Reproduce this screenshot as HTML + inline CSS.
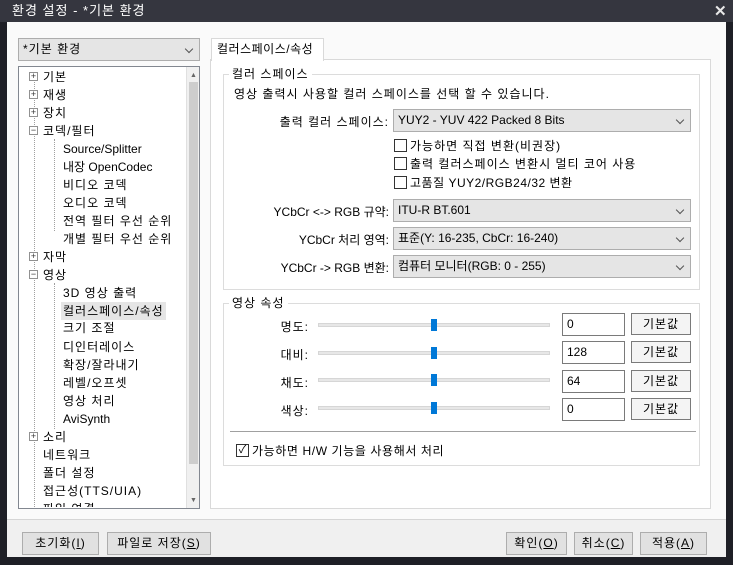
<!DOCTYPE html>
<html><head><meta charset="utf-8"><style>
*{margin:0;padding:0;box-sizing:border-box}
body{width:733px;height:565px;background:#1e1f26;font-family:"Liberation Sans","Noto Sans CJK KR",sans-serif;font-size:12px;color:#000;position:relative;overflow:hidden;letter-spacing:1px}
.l0{letter-spacing:0}
.a{position:absolute}
.title{left:0;top:0;width:733px;height:22px;background:#35363f;color:#fff;font-size:13px;line-height:22px;padding-left:12px}
.win{left:7px;top:22px;width:719px;height:535px;background:#fafafa}
.combo{background:#e5e5e5;border:1px solid #adadad;height:23px;line-height:21px;padding-left:4px;white-space:nowrap}
.combo:after{content:"";position:absolute;right:7px;top:7px;width:5px;height:5px;border-right:1px solid #555;border-bottom:1px solid #555;transform:rotate(45deg)}
.tree{left:18px;top:66px;width:182px;height:443px;background:#fff;border:1px solid #828790;overflow:hidden}
.sb{right:0;top:0;width:13px;height:441px;background:#f0f0f0;border-left:1px solid #e0e0e0}
.ti{position:absolute;height:18px;line-height:18px;white-space:nowrap}
.pm{position:absolute;width:9px;height:9px;border:1px solid #919191;background:#fff;font-size:9px;line-height:7px;text-align:center;color:#333;letter-spacing:0}
.lbl{text-align:right;white-space:nowrap}
.cb{position:absolute;width:13px;height:13px;border:1px solid #333;background:#fff}
.grp{border:1px solid #dcdcdc}
.gt{background:#fff;padding:0 3px;line-height:14px}
.track{height:4px;background:#e7e7e7;border:1px solid #d6d6d6}
.thumb{width:6px;height:12px;background:#0078d7}
.edit{border:1px solid #7a7a7a;background:#fff;height:23px;line-height:21px;padding-left:4px;letter-spacing:0}
.btn{border:1px solid #adadad;background:#e1e1e1;height:23px;line-height:21px;text-align:center}
.btn2{border:1px solid #7a7a7a;background:#f4f4f4;height:22px;line-height:20px;text-align:center}
.hd{position:absolute;width:6px;border-top:1px dotted #a0a0a0}
</style></head><body>
<div class="a title">환경 설정 - *기본 환경</div>
<div class="a" style="left:714px;top:2px;color:#e8e8e8;font-size:15px;font-weight:bold">✕</div>
<div class="a win"></div>

<div class="a combo" style="left:18px;top:38px;width:182px;height:23px">*기본 환경</div>

<div class="a tree">
<div class="a sb"><div class="a" style="left:3px;top:5px;font-size:7px;color:#666">▲</div><div class="a" style="left:2px;top:15px;width:9px;height:382px;background:#cdcdcd"></div><div class="a" style="left:3px;bottom:4px;font-size:7px;color:#666">▼</div></div>
<div class="a" style="left:15px;top:10px;height:430px;border-left:1px dotted #a0a0a0"></div>
<div class="a" style="left:35px;top:72px;height:92px;border-left:1px dotted #a0a0a0"></div>
<div class="a" style="left:35px;top:216px;height:146px;border-left:1px dotted #a0a0a0"></div>
</div>
<div class="a" style="left:19px;top:67px;width:167px;height:440px;overflow:hidden">
<div class="pm" style="left:10px;top:5px">+</div><div class="ti" style="left:24px;top:1px">기본</div>
<div class="pm" style="left:10px;top:23px">+</div><div class="ti" style="left:24px;top:19px">재생</div>
<div class="pm" style="left:10px;top:41px">+</div><div class="ti" style="left:24px;top:37px">장치</div>
<div class="pm" style="left:10px;top:59px">−</div><div class="ti" style="left:24px;top:55px">코덱/필터</div>
<div class="ti l0" style="left:44px;top:73px">Source/Splitter</div>
<div class="ti l0" style="left:44px;top:91px">내장 OpenCodec</div>
<div class="ti" style="left:44px;top:109px">비디오 코덱</div>
<div class="ti" style="left:44px;top:127px">오디오 코덱</div>
<div class="ti" style="left:44px;top:145px">전역 필터 우선 순위</div>
<div class="ti" style="left:44px;top:163px">개별 필터 우선 순위</div>
<div class="pm" style="left:10px;top:185px">+</div><div class="ti" style="left:24px;top:181px">자막</div>
<div class="pm" style="left:10px;top:203px">−</div><div class="ti" style="left:24px;top:199px">영상</div>
<div class="ti" style="left:44px;top:217px">3D 영상 출력</div>
<div class="ti" style="left:42px;top:235px;background:#e5e5e5;padding:0 2px">컬러스페이스/속성</div>
<div class="ti" style="left:44px;top:252px">크기 조절</div>
<div class="ti" style="left:44px;top:271px">디인터레이스</div>
<div class="ti" style="left:44px;top:289px">확장/잘라내기</div>
<div class="ti" style="left:44px;top:307px">레벨/오프셋</div>
<div class="ti" style="left:44px;top:325px">영상 처리</div>
<div class="ti l0" style="left:44px;top:343px">AviSynth</div>
<div class="pm" style="left:10px;top:365px">+</div><div class="ti" style="left:24px;top:361px">소리</div>
<div class="ti" style="left:24px;top:379px">네트워크</div>
<div class="ti" style="left:24px;top:397px">폴더 설정</div>
<div class="ti" style="left:24px;top:415px">접근성(TTS/UIA)</div>
<div class="ti" style="left:24px;top:433px">파일 연결</div>
</div>

<div class="a" style="left:210px;top:59px;width:501px;height:450px;background:#fff;border:1px solid #d9d9d9"></div>
<div class="a" style="left:211px;top:38px;width:113px;height:23px;background:#fff;border:1px solid #d9d9d9;border-bottom:none;padding-left:5px;line-height:20px;letter-spacing:0.5px">컬러스페이스/속성</div>

<div class="a grp" style="left:223px;top:74px;width:477px;height:216px"></div>
<div class="a gt" style="left:229px;top:67px">컬러 스페이스</div>
<div class="a" style="left:234px;top:85px">영상 출력시 사용할 컬러 스페이스를 선택 할 수 있습니다.</div>
<div class="a lbl" style="left:230px;top:113px;width:159px">출력 컬러 스페이스:</div>
<div class="a combo l0" style="left:393px;top:109px;width:298px">YUY2 - YUV 422 Packed 8 Bits</div>
<div class="cb" style="left:394px;top:139px"></div><div class="a" style="left:410px;top:137px">가능하면 직접 변환(비권장)</div>
<div class="cb" style="left:394px;top:157px"></div><div class="a" style="left:410px;top:155px">출력 컬러스페이스 변환시 멀티 코어 사용</div>
<div class="cb" style="left:394px;top:176px"></div><div class="a" style="left:410px;top:174px;letter-spacing:0.5px">고품질 YUY2/RGB24/32 변환</div>
<div class="a lbl l0" style="left:230px;top:203px;width:159px">YCbCr &lt;-&gt; RGB 규약:</div>
<div class="a combo l0" style="left:393px;top:199px;width:298px">ITU-R BT.601</div>
<div class="a lbl l0" style="left:230px;top:231px;width:159px">YCbCr 처리 영역:</div>
<div class="a combo l0" style="left:393px;top:227px;width:298px">표준(Y: 16-235, CbCr: 16-240)</div>
<div class="a lbl l0" style="left:230px;top:259px;width:159px">YCbCr -&gt; RGB 변환:</div>
<div class="a combo l0" style="left:393px;top:255px;width:298px">컴퓨터 모니터(RGB: 0 - 255)</div>

<div class="a grp" style="left:223px;top:303px;width:477px;height:163px"></div>
<div class="a gt" style="left:229px;top:296px">영상 속성</div>

<div class="a lbl" style="left:250px;top:318px;width:59px">명도:</div>
<div class="a track" style="left:318px;top:323px;width:232px"></div><div class="a thumb" style="left:431px;top:319px"></div>
<div class="a edit" style="left:562px;top:313px;width:63px">0</div><div class="a btn2" style="left:631px;top:313px;width:60px">기본값</div>

<div class="a lbl" style="left:250px;top:346px;width:59px">대비:</div>
<div class="a track" style="left:318px;top:351px;width:232px"></div><div class="a thumb" style="left:431px;top:347px"></div>
<div class="a edit" style="left:562px;top:341px;width:63px">128</div><div class="a btn2" style="left:631px;top:341px;width:60px">기본값</div>

<div class="a lbl" style="left:250px;top:374px;width:59px">채도:</div>
<div class="a track" style="left:318px;top:378px;width:232px"></div><div class="a thumb" style="left:431px;top:374px"></div>
<div class="a edit" style="left:562px;top:370px;width:63px">64</div><div class="a btn2" style="left:631px;top:370px;width:60px">기본값</div>

<div class="a lbl" style="left:250px;top:402px;width:59px">색상:</div>
<div class="a track" style="left:318px;top:406px;width:232px"></div><div class="a thumb" style="left:431px;top:402px"></div>
<div class="a edit" style="left:562px;top:398px;width:63px">0</div><div class="a btn2" style="left:631px;top:398px;width:60px">기본값</div>

<div class="a" style="left:230px;top:431px;width:466px;border-top:1px solid #a0a0a0"></div>
<div class="cb" style="left:236px;top:444px;text-align:center;line-height:11px;font-size:11px;letter-spacing:0">✓</div>
<div class="a" style="left:252px;top:442px;letter-spacing:0.6px">가능하면 H/W 기능을 사용해서 처리</div>

<div class="a" style="left:7px;top:519px;width:719px;border-top:1px solid #d5d5d5"></div>
<div class="a" style="left:7px;top:520px;width:719px;height:37px;background:#f0f0f0"></div>
<div class="a btn" style="left:22px;top:532px;width:77px">초기화(<u>I</u>)</div>
<div class="a btn" style="left:107px;top:532px;width:104px">파일로 저장(<u>S</u>)</div>
<div class="a btn" style="left:506px;top:532px;width:61px">확인(<u>O</u>)</div>
<div class="a btn" style="left:574px;top:532px;width:59px">취소(<u>C</u>)</div>
<div class="a btn" style="left:640px;top:532px;width:67px">적용(<u>A</u>)</div>
</body></html>
